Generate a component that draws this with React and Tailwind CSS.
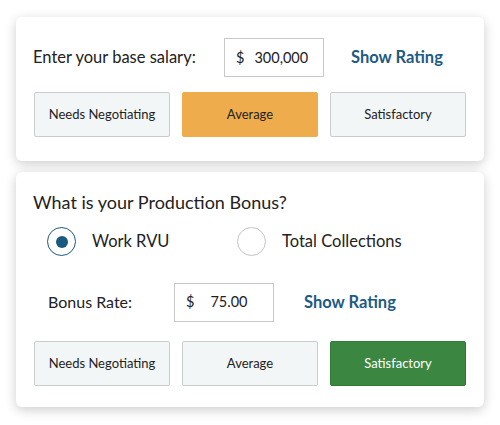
import React from "react";

const font = { fontFamily: "Lato, 'Open Sans', sans-serif" };

function RatingButtons({ active }) {
    const items = ["Needs Negotiating", "Average", "Satisfactory"];
    return (
        <div className="grid grid-cols-3 gap-[12px] px-[18px]">
            {items.map((label) => {
                let color = "bg-[#f3f6f7] border-[#c9cccd] text-[#222]";
                if (active === label && label === "Average") color = "bg-[#eeac4c] border-[#eeac4c] text-[#222]";
                if (active === label && label === "Satisfactory") color = "bg-[#3b8742] border-[#2f7a37] text-white";
                return (
                    <div
                        key={label}
                        className={`h-[45px] flex items-center justify-center border rounded-[2px] text-[13px] ${color}`}
                    >
                        {label}
                    </div>
                );
            })}
        </div>
    );
}

function MoneyInput({ value, gap }) {
    return (
        <div className="w-[100px] h-[39px] border border-[#c8c8c8] bg-white flex items-center pl-[11px] text-[14.5px] text-[#222]">
            <span>$</span>
            <span className={gap}>{value}</span>
        </div>
    );
}

function Radio({ checked, label }) {
    return (
        <div className="flex items-center">
            <div
                className={`w-[29px] h-[29px] rounded-full border flex items-center justify-center bg-white ${
                    checked ? "border-[#1b5a80]" : "border-[#c4c4c4]"
                }`}
            >
                {checked && <div className="w-[12px] h-[12px] rounded-full bg-[#1b5a80]" />}
            </div>
            <span className="ml-[16px] text-[16.5px] text-[#222]">{label}</span>
        </div>
    );
}

export default function App() {
    return (
        <div className="w-[500px] h-[425px] bg-white px-4 pt-[17px]" style={font}>
            <div className="h-[144px] bg-white rounded-[6px] shadow-[0_3px_12px_rgba(0,0,0,0.2)] pt-[21px]">
                <div className="flex items-center pl-[17px] h-[39px]">
                    <span className="text-[16.5px] text-[#222] w-[191px]">Enter your base salary:</span>
                    <MoneyInput value="300,000" gap="ml-[10px]" />
                    <span className="ml-[27px] text-[16.5px] font-bold text-[#1d5b83]">Show Rating</span>
                </div>
                <div className="mt-[15px]">
                    <RatingButtons active="Average" />
                </div>
            </div>

            <div className="mt-[11px] h-[235px] bg-white rounded-[6px] shadow-[0_3px_12px_rgba(0,0,0,0.2)] pt-[18px]">
                <div className="pl-[17px] text-[18px] leading-[24px] text-[#222]">What is your Production Bonus?</div>
                <div className="flex items-center mt-[13px] pl-[31px]">
                    <div className="w-[190px]">
                        <Radio checked label="Work RVU" />
                    </div>
                    <Radio label="Total Collections" />
                </div>
                <div className="flex items-center mt-[26px] pl-[32px] h-[40px]">
                    <span className="text-[16px] text-[#222] w-[126px]">Bonus Rate:</span>
                    <MoneyInput value="75.00" gap="ml-[16px]" />
                    <span className="ml-[30px] text-[16.5px] font-bold text-[#1d5b83]">Show Rating</span>
                </div>
                <div className="mt-[19px]">
                    <RatingButtons active="Satisfactory" />
                </div>
            </div>
        </div>
    );
}
